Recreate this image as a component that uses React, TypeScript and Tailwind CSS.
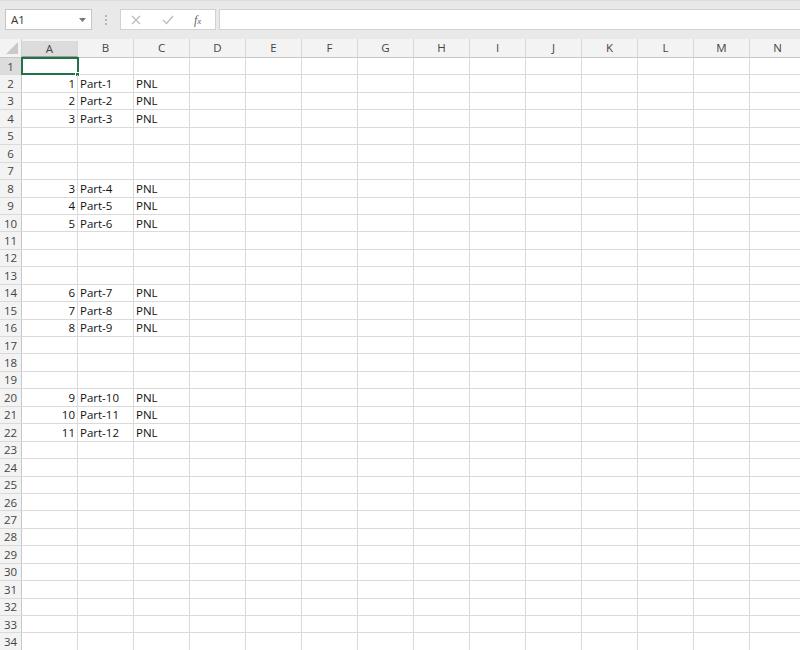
import React from "react";

const COLS = ["A", "B", "C", "D", "E", "F", "G", "H", "I", "J", "K", "L", "M", "N"];

type Row = { a?: string; b?: string; c?: string };

const DATA: Record<number, Row> = {
  2: { a: "1", b: "Part-1", c: "PNL" },
  3: { a: "2", b: "Part-2", c: "PNL" },
  4: { a: "3", b: "Part-3", c: "PNL" },
  8: { a: "3", b: "Part-4", c: "PNL" },
  9: { a: "4", b: "Part-5", c: "PNL" },
  10: { a: "5", b: "Part-6", c: "PNL" },
  14: { a: "6", b: "Part-7", c: "PNL" },
  15: { a: "7", b: "Part-8", c: "PNL" },
  16: { a: "8", b: "Part-9", c: "PNL" },
  20: { a: "9", b: "Part-10", c: "PNL" },
  21: { a: "10", b: "Part-11", c: "PNL" },
  22: { a: "11", b: "Part-12", c: "PNL" },
};

function FormulaBar() {
  return (
    <div className="flex h-[39px] items-start bg-[#e9e9e9] pt-[8px] border-t-[1px] border-[#dcdcdc]">
      <div className="ml-[5px] flex h-[21px] w-[87px] items-center justify-between border border-[#c6c6c6] bg-white pl-[5px] pr-[5px]">
        <span className="text-[11.5px] text-[#333]">A1</span>
        <svg width="7" height="4" viewBox="0 0 7 4">
          <path d="M0 0 L7 0 L3.5 4 Z" fill="#777" />
        </svg>
      </div>
      <div className="flex w-[28px] h-[21px] flex-col items-center justify-center gap-[2px]">
        <span className="h-[2px] w-[2px] bg-[#b5b5b5]" />
        <span className="h-[2px] w-[2px] bg-[#b5b5b5]" />
        <span className="h-[2px] w-[2px] bg-[#b5b5b5]" />
      </div>
      <div className="flex h-[21px] w-[96px] items-center border border-[#d2d2d2] bg-white">
        <svg className="ml-[10px]" width="10" height="10" viewBox="0 0 10 10">
          <path d="M1 1 L9 9 M9 1 L1 9" stroke="#bdbdbd" strokeWidth="1.3" />
        </svg>
        <svg className="ml-[21px]" width="12" height="10" viewBox="0 0 12 10">
          <path d="M1 5 L4.5 8.5 L11 1" stroke="#bdbdbd" strokeWidth="1.4" fill="none" />
        </svg>
        <span className="ml-[20px] font-['Liberation_Serif'] text-[12px] italic text-[#666]">
          f<span className="text-[9px]">x</span>
        </span>
      </div>
      <div className="ml-[3px] h-[21px] flex-1 border border-[#d2d2d2] border-r-0 bg-white" />
    </div>
  );
}

function Header() {
  return (
    <div className="flex h-[19px] border-b border-[#c8c8c8] bg-[#f3f3f3]">
      <div className="relative w-[22px] shrink-0 border-r border-[#d0d0d0]">
        <svg className="absolute bottom-[3px] right-[3px]" width="12" height="12" viewBox="0 0 12 12">
          <path d="M12 0 L12 12 L0 12 Z" fill="#c9c9c9" />
        </svg>
      </div>
      {COLS.map((c) => (
        <div
          key={c}
          className={
            "flex w-[56px] shrink-0 items-center justify-center border-r border-[#d8d8d8] text-[11.5px] text-[#444] " +
            (c === "A" ? "mt-[2px] bg-[#dcdcdc] border-b border-b-[#9e9e9e]" : "")
          }
        >
          {c}
        </div>
      ))}
    </div>
  );
}

function GridRow({ n }: { n: number }) {
  const d = DATA[n] || {};
  return (
    <div className="flex h-[17.44px] border-b border-[#dadada]">
      <div
        className={
          "flex w-[22px] shrink-0 items-center justify-center border-r border-[#c8c8c8] text-[11.5px] text-[#444] " +
          (n === 1 ? "bg-[#dcdcdc]" : "bg-[#f3f3f3]")
        }
      >
        {n}
      </div>
      {COLS.map((c, i) => (
        <div
          key={c}
          className={
            "relative flex w-[56px] shrink-0 items-center overflow-visible whitespace-nowrap border-r border-[#dadada] text-[11.5px] text-[#111] " +
            (i === 0 ? "justify-end pr-[2px]" : "pl-[2px]")
          }
        >
          {i === 0 && d.a}
          {i === 1 && d.b}
          {i === 2 && d.c}
          {n === 1 && i === 0 && (
            <>
              <div className="pointer-events-none absolute -left-[1px] -top-[1px] h-[calc(100%+2px)] w-[58px] border-2 border-[#217346]" />
              <div className="absolute -bottom-[3px] -right-[3px] h-[5px] w-[5px] border border-white bg-[#217346]" />
            </>
          )}
        </div>
      ))}
    </div>
  );
}

export default function App() {
  const rows = Array.from({ length: 34 }, (_, i) => i + 1);
  return (
    <div className="h-[650px] w-[800px] overflow-hidden bg-white font-['Open_Sans',sans-serif]">
      <FormulaBar />
      <Header />
      {rows.map((n) => (
        <GridRow key={n} n={n} />
      ))}
    </div>
  );
}
